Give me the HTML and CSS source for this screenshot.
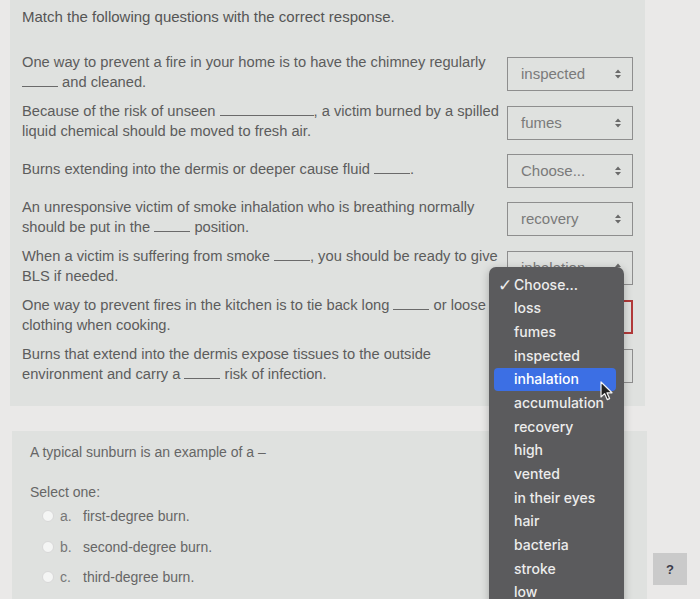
FILE: index.html
```html
<!DOCTYPE html>
<html lang="en">
<head>
<meta charset="utf-8">
<title>Match the following questions</title>
<link rel="stylesheet" href="styles.css">
</head>
<body>
<main class="page">
  <section class="panel match">
    <p class="title">Match the following questions with the correct response.</p>
    <div class="rows">
      <p class="q">One way to prevent a fire in your home is to have the chimney regularly <span class="blank"></span> and cleaned.</p>
      <div class="select"><span>inspected</span><svg class="arrows" viewBox="0 0 8 12" width="8" height="12"><path d="M1 5 L4 1.5 L7 5 Z M1 7 L4 10.5 L7 7 Z"/></svg></div>

      <p class="q">Because of the risk of unseen <span class="blank long"></span>, a victim burned by a spilled liquid chemical should be moved to fresh air.</p>
      <div class="select"><span>fumes</span><svg class="arrows" viewBox="0 0 8 12" width="8" height="12"><path d="M1 5 L4 1.5 L7 5 Z M1 7 L4 10.5 L7 7 Z"/></svg></div>

      <p class="q">Burns extending into the dermis or deeper cause fluid <span class="blank"></span>.</p>
      <div class="select"><span>Choose...</span><svg class="arrows" viewBox="0 0 8 12" width="8" height="12"><path d="M1 5 L4 1.5 L7 5 Z M1 7 L4 10.5 L7 7 Z"/></svg></div>

      <p class="q">An unresponsive victim of smoke inhalation who is breathing normally should be put in the <span class="blank"></span> position.</p>
      <div class="select"><span>recovery</span><svg class="arrows" viewBox="0 0 8 12" width="8" height="12"><path d="M1 5 L4 1.5 L7 5 Z M1 7 L4 10.5 L7 7 Z"/></svg></div>

      <p class="q">When a victim is suffering from smoke <span class="blank"></span>, you should be ready to give BLS if needed.</p>
      <div class="select"><span>inhalation</span><svg class="arrows" viewBox="0 0 8 12" width="8" height="12"><path d="M1 5 L4 1.5 L7 5 Z M1 7 L4 10.5 L7 7 Z"/></svg></div>

      <p class="q">One way to prevent fires in the kitchen is to tie back long <span class="blank"></span> or loose clothing when cooking.</p>
      <div class="select invalid"><span>Choose...</span><svg class="arrows" viewBox="0 0 8 12" width="8" height="12"><path d="M1 5 L4 1.5 L7 5 Z M1 7 L4 10.5 L7 7 Z"/></svg></div>

      <p class="q">Burns that extend into the dermis expose tissues to the outside environment and carry a <span class="blank"></span> risk of infection.</p>
      <div class="select"><span>Choose...</span><svg class="arrows" viewBox="0 0 8 12" width="8" height="12"><path d="M1 5 L4 1.5 L7 5 Z M1 7 L4 10.5 L7 7 Z"/></svg></div>
    </div>
  </section>

  <section class="panel choice">
    <p class="question">A typical sunburn is an example of a –</p>
    <p class="prompt">Select one:</p>
    <ul class="options">
      <li><span class="radio"></span><span class="letter">a.</span>first-degree burn.</li>
      <li><span class="radio"></span><span class="letter">b.</span>second-degree burn.</li>
      <li><span class="radio"></span><span class="letter">c.</span>third-degree burn.</li>
    </ul>
  </section>

  <ul class="menu">
    <li class="item"><span class="mark">✓</span>Choose...</li>
    <li class="item"><span class="mark"></span>loss</li>
    <li class="item"><span class="mark"></span>fumes</li>
    <li class="item"><span class="mark"></span>inspected</li>
    <li class="item active"><span class="mark"></span>inhalation</li>
    <li class="item"><span class="mark"></span>accumulation</li>
    <li class="item"><span class="mark"></span>recovery</li>
    <li class="item"><span class="mark"></span>high</li>
    <li class="item"><span class="mark"></span>vented</li>
    <li class="item"><span class="mark"></span>in their eyes</li>
    <li class="item"><span class="mark"></span>hair</li>
    <li class="item"><span class="mark"></span>bacteria</li>
    <li class="item"><span class="mark"></span>stroke</li>
    <li class="item"><span class="mark"></span>low</li>
  </ul>

  <svg class="cursor" viewBox="0 0 13 20" width="13" height="20"><path d="M1 1 L1 16 L4.6 12.6 L7.2 18.6 L9.6 17.6 L7 11.8 L12 11.8 Z"/></svg>

  <button class="help" type="button">?</button>
</main>
</body>
</html>
```

FILE: styles.css
```css
html, body {
  margin: 0;
  padding: 0;
  height: 599px;
  overflow: hidden;
}

body {
  background: #eae9e8;
  font-family: "Liberation Sans", Arial, sans-serif;
  font-size: 14.7px;
  line-height: 20px;
  color: #5a5a5a;
}

.page {
  position: relative;
  padding-left: 10px;
  height: 599px;
}

.panel {
  width: 635px;
  box-sizing: border-box;
  background: #dfe1df;
}

.match {
  padding: 7px 12px 22px 12px;
}

.title {
  margin: 0 0 25px;
  font-size: 15px;
  color: #555;
}

.rows {
  display: grid;
  grid-template-columns: 485px 126px;
  column-gap: 0;
  row-gap: 9px;
  align-items: center;
}

.q {
  margin: 0;
  color: #5c5c5c;
}

.blank {
  display: inline-block;
  width: 36px;
  height: 13px;
  border-bottom: 1px solid #6a6a6a;
  vertical-align: baseline;
}

.blank.long {
  width: 94px;
}

.select {
  height: 34px;
  box-sizing: border-box;
  margin-top: 4px;
  border: 1px solid #8e8e8e;
  padding: 0 10px 0 13px;
  display: flex;
  align-items: center;
  justify-content: space-between;
  font-size: 15px;
  color: #7a7a7a;
}

.select.invalid {
  border-color: #b23a3a;
  border-width: 2px;
}

.arrows {
  fill: #6a6a6a;
}

.choice {
  margin-top: 25px;
  margin-left: 2px;
  padding: 11px 18px 20px;
  height: 170px;
  font-size: 14px;
  color: #666;
}

.question {
  margin: 0 0 20px;
}

.prompt {
  margin: 0 0 4px;
}

.options {
  list-style: none;
  margin: 0;
  padding: 0 0 0 12px;
  display: flex;
  flex-direction: column;
  gap: 10.5px;
}

.options li {
  display: flex;
  align-items: center;
}

.radio {
  width: 10px;
  height: 10px;
  border-radius: 50%;
  background: #f4f5f4;
  border: 1px solid #d8d8d8;
  margin-right: 6px;
}

.letter {
  width: 23px;
  color: #777;
}

.menu {
  position: absolute;
  left: 489px;
  top: 267px;
  width: 135px;
  height: 350px;
  margin: 0;
  padding: 6px 0;
  box-sizing: border-box;
  list-style: none;
  background: #5b5b5d;
  border-radius: 7px;
  font-family: Inter, "Liberation Sans", sans-serif;
  font-size: 14px;
  font-weight: 500;
  color: #ececec;
  box-shadow: 0 2px 8px rgba(0, 0, 0, 0.25);
}

.item {
  display: flex;
  align-items: center;
  height: 23.65px;
  margin: 0 8px 0 5px;
  padding-left: 4px;
  border-radius: 4px;
  white-space: nowrap;
}

.mark {
  width: 16px;
  flex: none;
  font-family: "DejaVu Sans", sans-serif;
  font-size: 17px;
  line-height: 20px;
}

.item.active {
  background: #3c6fe4;
  color: #ffffff;
}

.cursor {
  position: absolute;
  left: 600px;
  top: 381px;
  fill: #222;
  stroke: #f4f4f4;
  stroke-width: 1.2;
  stroke-linejoin: round;
}

.help {
  position: absolute;
  left: 653px;
  top: 553px;
  width: 34px;
  height: 32px;
  border: 0;
  padding: 0;
  background: #cacaca;
  color: #3c3c4a;
  font-family: "Liberation Sans", Arial, sans-serif;
  font-size: 13px;
  font-weight: bold;
}
```
